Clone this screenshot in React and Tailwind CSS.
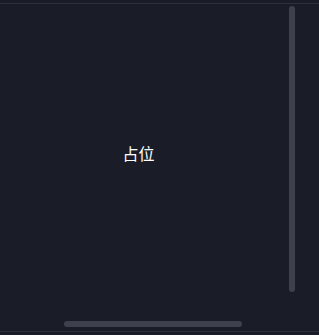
export default function App() {
  return (
    <div className="h-[335px] w-[319px] bg-[#1a1d28] pt-[3px] font-['Noto_Sans','Noto_Sans_CJK_SC',sans-serif]">
      <div className="relative h-[329px] border-y border-[#2c303c]">
        <div className="flex h-[300px] w-[277px] items-center justify-center">
          <span className="text-[16px] text-white">占位</span>
        </div>
        <div className="absolute left-[289px] top-[2px] h-[286px] w-[6px] rounded-full bg-[#3d414d]" />
        <div className="absolute left-[64px] top-[317px] h-[6px] w-[178px] rounded-full bg-[#3d414d]" />
      </div>
    </div>
  );
}
